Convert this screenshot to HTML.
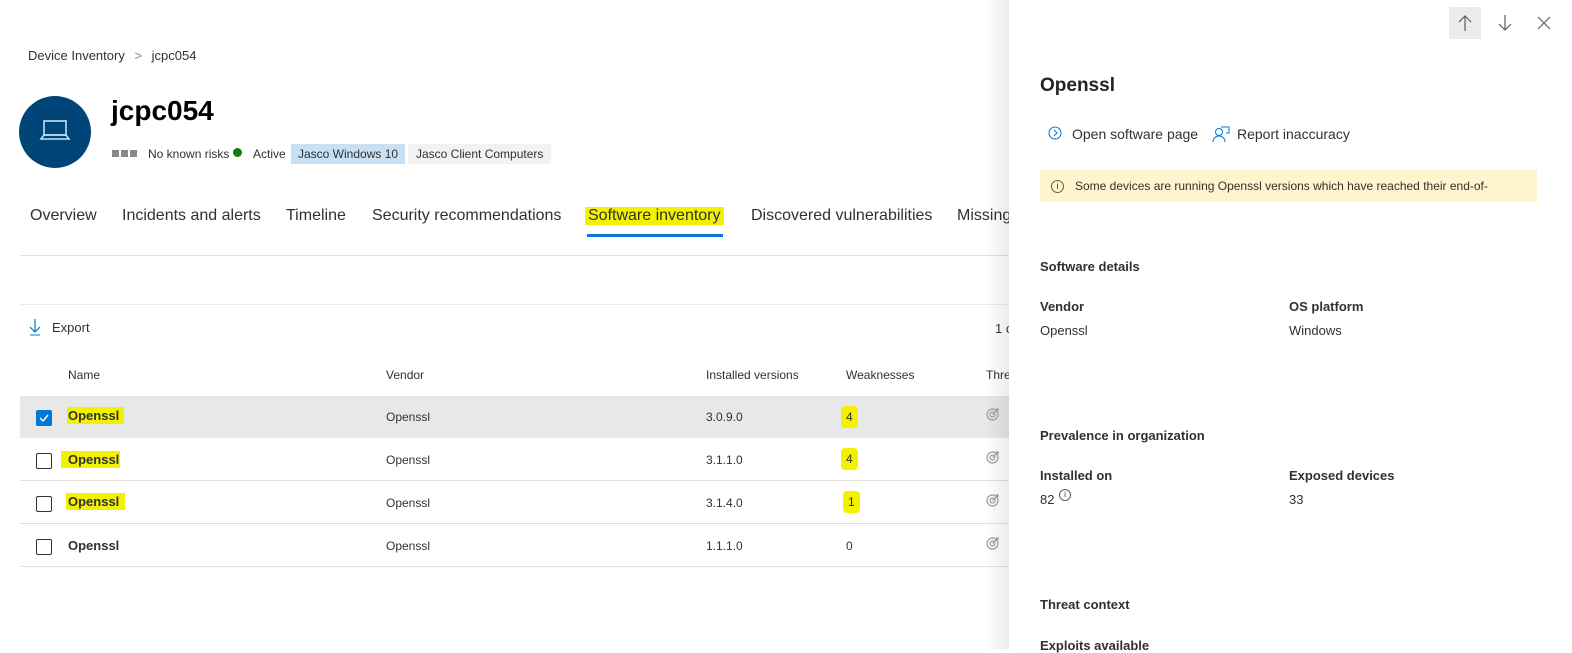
<!DOCTYPE html>
<html><head><meta charset="utf-8"><style>
*{margin:0;padding:0;box-sizing:border-box}
body{width:1572px;height:649px;overflow:hidden;background:#fff;font-family:"Segoe UI","Liberation Sans",sans-serif;color:#323130;position:relative}
.a{position:absolute;white-space:nowrap}
.hl{background:#f2f200}
.t{font-size:16px;color:#323130}
.cb{position:absolute;left:36px;width:16px;height:16px;border:1px solid #323130;border-radius:2px;background:#fff}
.row{position:absolute;left:20px;width:989px;height:43px;border-bottom:1px solid #e1dfdd}
.c{font-size:12px;color:#323130}
.tgt{position:absolute;left:986px}
</style></head><body>
<div class="a" style="left:28px;top:48px;font-size:13px">Device Inventory <span style="color:#8a8886;margin:0 6px">&gt;</span> jcpc054</div>
<div class="a" style="left:19px;top:96px;width:72px;height:72px;border-radius:50%;background:#004578"></div>
<svg class="a" style="left:38px;top:118px" width="34" height="26" viewBox="0 0 34 26"><rect x="6" y="3" width="22" height="14" fill="none" stroke="#c7e0f4" stroke-width="1.6"/><path d="M3 21h28l-3-4H6z" fill="none" stroke="#c7e0f4" stroke-width="1.6"/></svg>
<div class="a" style="left:111px;top:95px;font-size:28px;font-weight:bold;color:#000">jcpc054</div>
<div class="a" style="left:112px;top:150px;width:7px;height:7px;background:#8a8886;box-shadow:9px 0 #8a8886,18px 0 #8a8886"></div>
<div class="a" style="left:148px;top:147px;font-size:12px">No known risks</div>
<div class="a" style="left:233px;top:148px;width:9px;height:9px;border-radius:50%;background:#107c10"></div>
<div class="a" style="left:253px;top:147px;font-size:12px">Active</div>
<div class="a" style="left:291px;top:144px;height:20px;padding:3px 7px;background:#c7e0f4;font-size:12px">Jasco Windows 10</div>
<div class="a" style="left:408px;top:144px;height:20px;padding:3px 8px;background:#f3f2f1;font-size:12px">Jasco Client Computers</div>
<div class="a t" style="left:30px;top:207px">Overview</div>
<div class="a t" style="left:122px;top:207px">Incidents and alerts</div>
<div class="a t" style="left:286px;top:207px">Timeline</div>
<div class="a t" style="left:372px;top:207px">Security recommendations</div>
<div class="a t hl" style="left:585px;top:207px;padding:0 3px">Software inventory</div>
<div class="a" style="left:587px;top:234px;width:136px;height:3px;background:#0078d4"></div>
<div class="a t" style="left:751px;top:207px">Discovered vulnerabilities</div>
<div class="a t" style="left:957px;top:207px">Missing</div>
<div class="a" style="left:20px;top:255px;width:989px;height:1px;background:#e1dfdd"></div>
<div class="a" style="left:20px;top:304px;width:989px;height:1px;background:#edebe9"></div>
<svg class="a" style="left:28px;top:318px" width="14" height="18"><path d="M7 1v13M2 9l5 5 5-5" fill="none" stroke="#0078d4" stroke-width="1.2"/><path d="M2 17h10" stroke="#0078d4"/></svg>
<div class="a" style="left:52px;top:320px;font-size:13px">Export</div>
<div class="a" style="left:995px;top:321px;font-size:13px">1 o</div>
<div class="a c" style="left:68px;top:368px">Name</div>
<div class="a c" style="left:386px;top:368px">Vendor</div>
<div class="a c" style="left:706px;top:368px">Installed versions</div>
<div class="a c" style="left:846px;top:368px">Weaknesses</div>
<div class="a c" style="left:986px;top:368px">Thre</div>
<div class="row" style="top:396px;height:42px;background:#e8e8e8;border:none"></div>
<div class="row" style="top:438px"></div>
<div class="row" style="top:481px"></div>
<div class="row" style="top:524px"></div>
<div class="cb" style="top:410px;background:#0078d4;border-color:#0078d4"><svg width="14" height="14" style="position:absolute;left:0;top:0"><path d="M3 7l3 3 5-6" fill="none" stroke="#fff" stroke-width="1.4"/></svg></div>
<div class="cb" style="top:453px"></div>
<div class="cb" style="top:496px"></div>
<div class="cb" style="top:539px"></div>
<div class="a hl" style="left:67px;top:407px;font-size:13px;font-weight:600;padding:1px 5px 1px 1px">Openssl</div>
<div class="a hl" style="left:61px;top:451px;font-size:13px;font-weight:600;padding:1px 1px 1px 7px">Openssl</div>
<div class="a hl" style="left:66px;top:493px;font-size:13px;font-weight:600;padding:1px 6px 1px 2px">Openssl</div>
<div class="a" style="left:68px;top:538px;font-size:13px;font-weight:600">Openssl</div>
<div class="a c" style="left:386px;top:410px">Openssl</div>
<div class="a c" style="left:386px;top:453px">Openssl</div>
<div class="a c" style="left:386px;top:496px">Openssl</div>
<div class="a c" style="left:386px;top:539px">Openssl</div>
<div class="a c" style="left:706px;top:410px">3.0.9.0</div>
<div class="a c" style="left:706px;top:453px">3.1.1.0</div>
<div class="a c" style="left:706px;top:496px">3.1.4.0</div>
<div class="a c" style="left:706px;top:539px">1.1.1.0</div>
<div class="a c hl" style="left:841px;top:406px;padding:4px 5px;border-radius:4px">4</div>
<div class="a c hl" style="left:841px;top:448px;padding:4px 5px;border-radius:4px">4</div>
<div class="a c hl" style="left:843px;top:491px;padding:4px 5px;border-radius:4px">1</div>
<div class="a c" style="left:846px;top:539px">0</div>
<svg class="tgt" style="top:407px" width="14" height="14"><circle cx="6.5" cy="7.5" r="5.5" fill="none" stroke="#a19f9d" stroke-width="1.2"/><circle cx="6.5" cy="7.5" r="2.5" fill="none" stroke="#a19f9d" stroke-width="1.2"/><path d="M6.5 7.5L12 2M10 2h2v2" fill="none" stroke="#a19f9d" stroke-width="1.2"/></svg>
<svg class="tgt" style="top:450px" width="14" height="14"><circle cx="6.5" cy="7.5" r="5.5" fill="none" stroke="#a19f9d" stroke-width="1.2"/><circle cx="6.5" cy="7.5" r="2.5" fill="none" stroke="#a19f9d" stroke-width="1.2"/><path d="M6.5 7.5L12 2M10 2h2v2" fill="none" stroke="#a19f9d" stroke-width="1.2"/></svg>
<svg class="tgt" style="top:493px" width="14" height="14"><circle cx="6.5" cy="7.5" r="5.5" fill="none" stroke="#a19f9d" stroke-width="1.2"/><circle cx="6.5" cy="7.5" r="2.5" fill="none" stroke="#a19f9d" stroke-width="1.2"/><path d="M6.5 7.5L12 2M10 2h2v2" fill="none" stroke="#a19f9d" stroke-width="1.2"/></svg>
<svg class="tgt" style="top:536px" width="14" height="14"><circle cx="6.5" cy="7.5" r="5.5" fill="none" stroke="#a19f9d" stroke-width="1.2"/><circle cx="6.5" cy="7.5" r="2.5" fill="none" stroke="#a19f9d" stroke-width="1.2"/><path d="M6.5 7.5L12 2M10 2h2v2" fill="none" stroke="#a19f9d" stroke-width="1.2"/></svg>
<!-- panel -->
<div class="a" style="left:985px;top:0;width:24px;height:649px;background:linear-gradient(to right,rgba(0,0,0,0),rgba(0,0,0,0.08))"></div>
<div class="a" style="left:1009px;top:0;width:563px;height:649px;background:#fff"></div>
<div class="a" style="left:1449px;top:7px;width:32px;height:32px;background:#edebe9"></div>
<svg class="a" style="left:1457px;top:14px" width="16" height="18"><path d="M8 17V2M2 8l6-6 6 6" fill="none" stroke="#605e5c" stroke-width="1.2"/></svg>
<svg class="a" style="left:1497px;top:14px" width="16" height="18"><path d="M8 1v15M2 10l6 6 6-6" fill="none" stroke="#605e5c" stroke-width="1.2"/></svg>
<svg class="a" style="left:1537px;top:16px" width="14" height="14"><path d="M1 1l12 12M13 1L1 13" stroke="#605e5c" stroke-width="1.2"/></svg>
<div class="a" style="left:1040px;top:75px;font-size:19px;font-weight:bold;color:#252423">Openssl</div>
<svg class="a" style="left:1048px;top:126px" width="14" height="14"><circle cx="7" cy="7" r="6" fill="none" stroke="#0078d4"/><path d="M6 4l3 3-3 3" fill="none" stroke="#0078d4"/></svg>
<div class="a" style="left:1072px;top:126px;font-size:14px">Open software page</div>
<svg class="a" style="left:1212px;top:125px" width="18" height="18"><circle cx="7" cy="7" r="3.5" fill="none" stroke="#0078d4"/><path d="M1 17c0-4 3-6 6-6s6 2 6 6M9 2h8v6h-3" fill="none" stroke="#0078d4"/></svg>
<div class="a" style="left:1237px;top:126px;font-size:14px">Report inaccuracy</div>
<div class="a" style="left:1040px;top:170px;width:497px;height:32px;background:#fff4ce"></div>
<div class="a" style="left:1051px;top:180px;width:13px;height:13px;border:1px solid #605e5c;border-radius:50%;font-size:9px;text-align:center;line-height:11px">i</div>
<div class="a" style="left:1075px;top:179px;font-size:12px">Some devices are running Openssl versions which have reached their end-of-</div>
<div class="a" style="left:1040px;top:259px;font-size:13px;font-weight:bold">Software details</div>
<div class="a" style="left:1040px;top:299px;font-size:13px;font-weight:600">Vendor</div>
<div class="a" style="left:1289px;top:299px;font-size:13px;font-weight:600">OS platform</div>
<div class="a" style="left:1040px;top:323px;font-size:13px">Openssl</div>
<div class="a" style="left:1289px;top:323px;font-size:13px">Windows</div>
<div class="a" style="left:1040px;top:428px;font-size:13px;font-weight:bold">Prevalence in organization</div>
<div class="a" style="left:1040px;top:468px;font-size:13px;font-weight:600">Installed on</div>
<div class="a" style="left:1289px;top:468px;font-size:13px;font-weight:600">Exposed devices</div>
<div class="a" style="left:1040px;top:492px;font-size:13px">82</div>
<div class="a" style="left:1059px;top:489px;width:12px;height:12px;border:1px solid #605e5c;border-radius:50%;font-size:8px;text-align:center;line-height:10px">i</div>
<div class="a" style="left:1289px;top:492px;font-size:13px">33</div>
<div class="a" style="left:1040px;top:597px;font-size:13px;font-weight:bold">Threat context</div>
<div class="a" style="left:1040px;top:638px;font-size:13px;font-weight:600">Exploits available</div>
</body></html>
